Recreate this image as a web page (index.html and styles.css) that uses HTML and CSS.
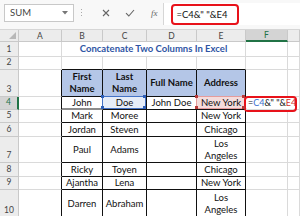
FILE: index.html
```html
<!DOCTYPE html>
<html lang="en">
<head>
<meta charset="UTF-8">
<meta name="viewport" content="width=device-width, initial-scale=1.0">
<title>Concatenate Two Columns In Excel</title>
<link rel="stylesheet" href="styles.css">
</head>
<body>

<div class="toolbar">
  <div class="namebox">
    <span>SUM</span>
    <svg class="drop" width="6" height="4" viewBox="0 0 6 4"><path d="M0 0 L6 0 L3 3.5 Z" fill="#777"/></svg>
  </div>
  <div class="grip"><i></i><i></i><i></i></div>
  <svg class="btn" width="8" height="8" viewBox="0 0 8 8"><path d="M1 1 L7 7 M7 1 L1 7" stroke="#666" stroke-width="1.1"/></svg>
  <svg class="btn ok" width="10" height="8" viewBox="0 0 10 8"><path d="M1 4.2 L3.8 7 L9 1" stroke="#666" stroke-width="1.1" fill="none"/></svg>
  <span class="fx">fx</span>
  <div class="formula">
    <span class="ftext">=C4&amp;" "&amp;E4</span>
  </div>
</div>

<div class="sheet">
  <div class="c h corner"><svg width="7" height="7" viewBox="0 0 7 7"><path d="M7 0 L7 7 L0 7 Z" fill="#b8b8b8"/></svg></div>
  <div class="c h">A</div>
  <div class="c h">B</div>
  <div class="c h">C</div>
  <div class="c h">D</div>
  <div class="c h">E</div>
  <div class="c h on-col">F</div>
  <div class="c h"></div>

  <div class="c h rn">1</div>
  <div class="c"></div>
  <div class="c title">Concatenate Two Columns In Excel</div>
  <div class="c"></div>
  <div class="c"></div>

  <div class="c h rn">2</div>
  <div class="c"></div>
  <div class="c bt"></div>
  <div class="c bt"></div>
  <div class="c bt"></div>
  <div class="c bt"></div>
  <div class="c"></div>
  <div class="c"></div>

  <div class="c h rn">3</div>
  <div class="c bl"></div>
  <div class="c t th">First<br>Name</div>
  <div class="c t th">Last<br>Name</div>
  <div class="c t th">Full Name</div>
  <div class="c t th">Address</div>
  <div class="c"></div>
  <div class="c"></div>

  <div class="c h rn on-row">4</div>
  <div class="c bl"></div>
  <div class="c t under">John</div>
  <div class="c t ref blue">Doe<span class="knobs"></span></div>
  <div class="c t">John Doe</div>
  <div class="c t ref red">New York<span class="knobs"></span></div>
  <div class="c edit">=<b class="kb">C4</b>&amp;" "&amp;<b class="kr">E4</b></div>
  <div class="c"></div>

  <div class="c h rn">5</div>
  <div class="c bl"></div>
  <div class="c t">Mark</div>
  <div class="c t">Moree</div>
  <div class="c t"></div>
  <div class="c t">New York</div>
  <div class="c"></div>
  <div class="c"></div>

  <div class="c h rn">6</div>
  <div class="c bl"></div>
  <div class="c t">Jordan</div>
  <div class="c t">Steven</div>
  <div class="c t"></div>
  <div class="c t">Chicago</div>
  <div class="c"></div>
  <div class="c"></div>

  <div class="c h rn">7</div>
  <div class="c bl"></div>
  <div class="c t">Paul</div>
  <div class="c t">Adams</div>
  <div class="c t"></div>
  <div class="c t">Los<br>Angeles</div>
  <div class="c"></div>
  <div class="c"></div>

  <div class="c h rn">8</div>
  <div class="c bl"></div>
  <div class="c t">Ricky</div>
  <div class="c t">Toyen</div>
  <div class="c t"></div>
  <div class="c t">Chicago</div>
  <div class="c"></div>
  <div class="c"></div>

  <div class="c h rn">9</div>
  <div class="c bl"></div>
  <div class="c t">Ajantha</div>
  <div class="c t">Lena</div>
  <div class="c t"></div>
  <div class="c t">New York</div>
  <div class="c"></div>
  <div class="c"></div>

  <div class="c h rn">10</div>
  <div class="c bl"></div>
  <div class="c t">Darren</div>
  <div class="c t">Abraham</div>
  <div class="c t"></div>
  <div class="c t">Los<br>Angeles</div>
  <div class="c"></div>
  <div class="c"></div>
</div>

<div class="mark cell-mark"></div>

</body>
</html>
```

FILE: styles.css
```css
body {
  margin: 0;
  width: 300px;
  height: 216px;
  overflow: hidden;
  position: relative;
  font-family: Lato, "Liberation Sans", sans-serif;
  background-color: #fff;
}

/* formula bar */
.toolbar {
  height: 30px;
  box-sizing: border-box;
  display: flex;
  align-items: center;
  padding-bottom: 4px;
  background-color: #f8f8f8;
  border-bottom: 1px solid #d6d6d6;
}
.namebox {
  width: 70px;
  height: 18px;
  margin-left: 4px;
  box-sizing: border-box;
  border: 1px solid #c8c8c8;
  background-color: #fff;
  display: flex;
  align-items: center;
  justify-content: space-between;
  padding: 0 5px 0 5px;
  font-size: 9.5px;
  color: #444;
}
.grip {
  width: 2px;
  margin-left: 7px;
  display: flex;
  flex-direction: column;
  gap: 2px;
}
.grip i {
  width: 1px;
  height: 1px;
  background-color: #aaa;
}
.btn {
  margin-left: 19px;
}
.btn.ok {
  margin-left: 15px;
}
.fx {
  margin-left: 16px;
  font-family: "Liberation Serif", serif;
  font-style: italic;
  font-size: 9px;
  color: #666;
}
.formula {
  flex: 1;
  align-self: stretch;
  margin-left: 5px;
  margin-top: 3px;
  padding-top: 1px;
  background-color: #fff;
  border-left: 1px solid #d6d6d6;
  display: flex;
  align-items: flex-start;
}
.ftext {
  margin-left: 7px;
  height: 21px;
  width: 68px;
  box-sizing: border-box;
  border: 2px solid #e8121a;
  border-radius: 4px;
  padding-left: 4px;
  display: flex;
  align-items: center;
  font-size: 9.5px;
  color: #111;
}

/* grid */
.sheet {
  display: grid;
  grid-template-columns: 19px 43px 41px 44px 50px 49px 42px 1fr;
  grid-template-rows: 12px 15px 13px 27px 13px 13px 14px 26px 14px 13px 28px;
}
.c {
  box-sizing: border-box;
  border-right: 1px solid #dadada;
  border-bottom: 1px solid #dadada;
  display: flex;
  align-items: center;
  justify-content: center;
  text-align: center;
  font-size: 9.5px;
  line-height: 12px;
  color: #111;
  white-space: nowrap;
}
.h {
  background-color: #ececec;
  border-color: #c9c9c9;
  color: #444;
  font-size: 8.5px;
}
.corner {
  justify-content: flex-end;
  align-items: flex-end;
  padding: 0 2px 2px 0;
}
.rn {
  align-items: flex-end;
  padding-bottom: 1px;
}
.on-col {
  background-color: #d4d4d4;
  border-bottom: 2px solid #217346;
  color: #217346;
}
.on-row {
  background-color: #d4d4d4;
  border-right: 2px solid #217346;
  color: #217346;
}
.title {
  grid-column: span 4;
  color: #2f55a4;
  font-weight: bold;
  font-size: 9.5px;
}
.t {
  border-right-color: #111;
  border-bottom-color: #111;
}
.bl {
  border-right-color: #111;
}
.bt {
  border-bottom-color: #111;
}
.th {
  background-color: #b4c6e7;
  font-weight: bold;
}
.under {
  border-bottom: 2px solid #8c8c8c;
}

/* referenced cells while editing */
.ref {
  position: relative;
}
.ref::after {
  content: "";
  position: absolute;
  left: -1px;
  top: -1px;
  right: 0;
  bottom: 0;
  border: 1.5px solid;
}
.blue {
  background-color: #e6edf8;
}
.blue::after {
  border-color: #4472c4;
}
.red {
  background-color: #f4dcdc;
}
.red::after {
  border-color: #e59c9c;
}
.knobs {
  position: absolute;
  left: -2px;
  top: -2px;
  width: 3px;
  height: 3px;
  z-index: 2;
}
.blue .knobs {
  background-color: #2e5fb8;
  box-shadow: 42px 0 #2e5fb8, 0 11px #2e5fb8, 42px 11px #2e5fb8;
}
.red .knobs {
  background-color: #b83b3b;
  box-shadow: 47px 0 #b83b3b, 0 11px #b83b3b, 47px 11px #b83b3b;
}
.edit {
  justify-content: flex-start;
  padding-left: 2px;
  font-size: 9px;
  border-right-color: transparent;
  overflow: visible;
  position: relative;
  z-index: 1;
}
.edit b {
  font-weight: normal;
}
.kb {
  color: #3a6fd0;
}
.kr {
  color: #d0312d;
}

/* red annotation around the edited cell */
.mark {
  position: absolute;
  border: 2px solid #e8121a;
  border-radius: 4px;
  box-sizing: border-box;
}
.cell-mark {
  left: 244px;
  top: 96px;
  width: 53px;
  height: 16px;
}
```
